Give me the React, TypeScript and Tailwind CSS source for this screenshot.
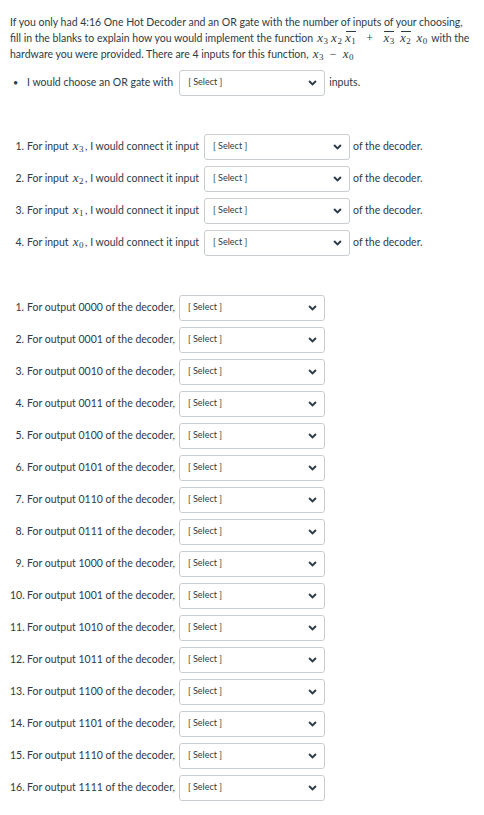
import { ReactNode } from 'react';

const font = { fontFamily: 'Lato, "Open Sans", sans-serif' };
const serif = { fontFamily: '"Liberation Serif", serif' };

function V({ n, bar }: { n: string; bar?: boolean }) {
  return (
    <span className="relative inline-block leading-[10px] mx-[1.5px]" style={serif}>
      {bar && <span className="absolute left-[1px] right-0 top-[-2px] border-t border-[#2d3b45]" />}
      <i className="text-[13px]">x</i>
      <span className="text-[9px] relative top-[2px] ml-[0.5px]">{n}</span>
    </span>
  );
}

function Select() {
  return (
    <div className="w-[146px] h-[26px] shrink-0 bg-white border border-[#c7cdd1] rounded-[3px] flex items-center justify-between pl-[8px] pr-[7px] pb-[3px]">
      <span className="text-[9px] text-[#2d3b45]">[ Select ]</span>
      <svg width="9" height="6" viewBox="0 0 10 7" className="mt-[3px]">
        <path d="M1 1.2 L5 5.2 L9 1.2" stroke="#2d3b45" strokeWidth="2.3" fill="none" />
      </svg>
    </div>
  );
}

function Row({ num, children }: { num?: string; children: ReactNode }) {
  return (
    <div className="h-[26px] flex items-center">
      <span className="w-[14px] text-right shrink-0">{num}</span>
      <span className="w-[3px] shrink-0" />
      {children}
    </div>
  );
}

const subs = ['3', '2', '1', '0'];
const outputs = [
  '0000', '0001', '0010', '0011', '0100', '0101', '0110', '0111',
  '1000', '1001', '1010', '1011', '1100', '1101', '1110', '1111',
];

export default function App() {
  return (
    <div className="w-[484px] min-h-[815px] bg-white text-[#2d3b45] text-[10.5px] px-[10px] pt-[14px]" style={font}>
      <p className="leading-[16px] w-[464px]">
        If you only had 4:16 One Hot Decoder and an OR gate with the number of inputs of your choosing,
        fill in the blanks to explain how you would implement the function{' '}
        <V n="3" /><V n="2" /><V n="1" bar />
        <span className="mx-[9px] text-[12px]" style={serif}>+</span>
        <V n="3" bar /> <V n="2" bar /> <V n="0" /> with the hardware you were provided. There are 4 inputs for this function,{' '}
        <V n="3" /> <span className="mx-[2px] text-[12px]" style={serif}>−</span> <V n="0" />
      </p>

      <div className="mt-[8px] h-[26px] flex items-center">
        <span className="w-[17px] pl-[3px] shrink-0 text-[9px]">•</span>
        <span className="mr-[6px]">I would choose an OR gate with</span>
        <Select />
        <span className="ml-[4px]">inputs.</span>
      </div>

      <div className="mt-[38px] flex flex-col gap-[6px]">
        {subs.map((s, i) => (
          <Row key={s} num={`${i + 1}.`}>
            <span className="mr-[5px] whitespace-nowrap">
              For input <V n={s} />, I would connect it input
            </span>
            <Select />
            <span className="ml-[3px] whitespace-nowrap">of the decoder.</span>
          </Row>
        ))}
      </div>

      <div className="mt-[39px] flex flex-col gap-[6px]">
        {outputs.map((o, i) => (
          <Row key={o} num={`${i + 1}.`}>
            <span className="mr-[4px] whitespace-nowrap">For output {o} of the decoder,</span>
            <Select />
          </Row>
        ))}
      </div>
    </div>
  );
}
